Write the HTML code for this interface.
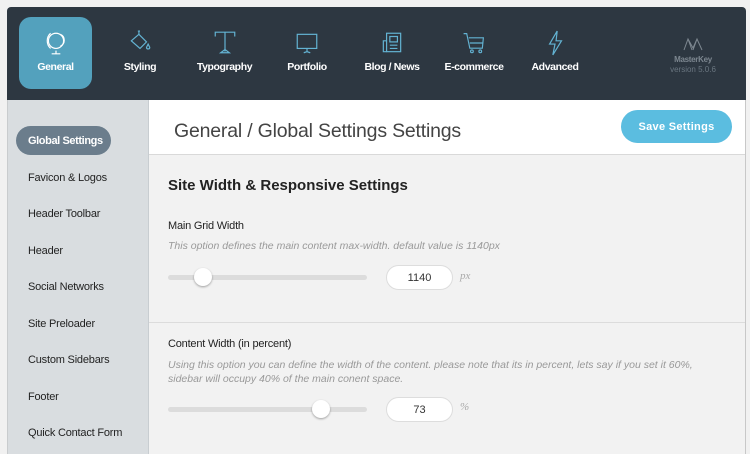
<!DOCTYPE html>
<html><head><meta charset="utf-8"><style>
*{margin:0;padding:0;box-sizing:border-box}
body{width:750px;height:454px;overflow:hidden;background:#f1f1f1;font-family:"Liberation Sans",Arial,sans-serif;position:relative}
.hdr{position:absolute;left:7px;top:7px;width:739px;height:93px;background:#2d3741;border-radius:4px 4px 0 0}
.tab{position:absolute;top:10px;height:72px;text-align:center;color:#fff;font-size:10.5px;font-weight:bold;letter-spacing:-0.4px}
.tab svg{position:absolute;left:50%;top:13px;transform:translateX(-50%)}
.tab span{position:absolute;left:-10px;right:-10px;top:44px;text-align:center;white-space:nowrap}
.tab.act{background:#53a1bd;border-radius:12px}
.side{position:absolute;left:7px;top:100px;width:142px;height:354px;background:#d9dde0;border-right:1px solid #c8cdd1;border-left:1px solid #c9ccce}
.side .it{position:absolute;left:20px;font-size:11px;color:#222;white-space:nowrap;letter-spacing:-0.2px}
.side .pill{position:absolute;left:8px;top:26px;width:95px;height:29px;background:#6b7d8c;border-radius:15px}
.main{position:absolute;left:149px;top:100px;width:597px;height:354px;background:#f2f2f2;border-right:1px solid #c8c8c8}
.top{position:absolute;left:0;top:0;width:596px;height:55px;background:#fff;border-bottom:1px solid #d9d9d9}
.top h1{position:absolute;left:25px;top:20px;font-size:19.5px;font-weight:normal;color:#444;letter-spacing:-0.2px}
.save{position:absolute;left:472px;top:10px;width:111px;height:33px;background:#5bbde0;border-radius:17px;color:#fff;font-size:11px;font-weight:bold;text-align:center;line-height:34px;letter-spacing:0.3px}
.h2{position:absolute;left:19px;top:77px;font-size:15px;font-weight:bold;color:#222}
.lbl{position:absolute;left:19px;font-size:11px;color:#222;letter-spacing:-0.2px}
.desc{position:absolute;left:19px;font-size:10.5px;font-style:italic;color:#999;line-height:14px}
.track{position:absolute;left:19px;width:199px;height:5px;background:#dcdcdc;border-radius:3px}
.knob{position:absolute;width:18px;height:18px;border-radius:50%;background:#fff;box-shadow:0 1px 2px rgba(0,0,0,.35)}
.inp{position:absolute;left:237px;width:67px;height:25px;border:1px solid #ddd;background:#fff;border-radius:13px;text-align:center;line-height:24px;font-size:11px;color:#333}
.unit{position:absolute;left:311px;font-size:11px;font-style:italic;color:#aaa;font-family:"Liberation Serif",serif}
.sep{position:absolute;left:0;top:222px;width:596px;height:1px;background:#dcdcdc}
</style></head><body>
<div class="hdr">
 <div class="tab act" style="left:12px;width:73px">
  <svg width="24" height="26" viewBox="0 0 22 24" fill="none" stroke="#fff" stroke-width="1.1"><circle cx="11" cy="10" r="7"/><path d="M6 3a9.5 9.5 0 0 0 0 14M11 19v3M7 22h8M15 4a6 6 0 0 1 0 11"/></svg>
  <span>General</span></div>
 <div class="tab" style="left:98px;width:70px">
  <svg width="24" height="26" viewBox="0 0 22 24" fill="none" stroke="#63b3d3" stroke-width="1.1"><path d="M3 10l7-6 7 7-6 6z M10 4V1 M9 1h2 M17 16c0 2 3 2 3 0l-1.5-3z"/></svg>
  <span>Styling</span></div>
 <div class="tab" style="left:180px;width:75px">
  <svg width="24" height="26" viewBox="0 0 22 24" fill="none" stroke="#63b3d3" stroke-width="1.1"><path d="M2 6V2h18v4M11 2v18M7 21h8l-4-3z"/></svg>
  <span>Typography</span></div>
 <div class="tab" style="left:270px;width:60px">
  <svg width="24" height="26" viewBox="0 0 22 24" fill="none" stroke="#63b3d3" stroke-width="1.1"><rect x="2" y="4" width="18" height="13"/><path d="M11 17v3M8 21l3-1 3 1"/></svg>
  <span>Portfolio</span></div>
 <div class="tab" style="left:350px;width:70px">
  <svg width="24" height="26" viewBox="0 0 22 24" fill="none" stroke="#63b3d3" stroke-width="1.1"><rect x="6" y="3" width="13" height="17"/><rect x="9" y="6" width="7" height="5"/><path d="M9 14h7M9 17h7M6 10H3v10h3"/></svg>
  <span>Blog / News</span></div>
 <div class="tab" style="left:432px;width:70px">
  <svg width="25" height="26" viewBox="0 0 24 24" fill="none" stroke="#63b3d3" stroke-width="1.1"><path d="M2 3h3l3 14h12l1-10H7M8 12h12"/><circle cx="10" cy="20" r="1.3"/><circle cx="18" cy="20" r="1.3"/></svg>
  <span>E-commerce</span></div>
 <div class="tab" style="left:518px;width:60px">
  <svg width="24" height="26" viewBox="0 0 22 24" fill="none" stroke="#63b3d3" stroke-width="1.1"><path d="M13 1L6 13h5l-2 10 8-13h-5z"/></svg>
  <span>Advanced</span></div>
 <svg style="position:absolute;left:676px;top:30px" width="20" height="14" viewBox="0 0 20 14" fill="none" stroke="#7d8790" stroke-width="1"><path d="M1 13L5 2l5 9 4-9 5 11M5 2l4 11M14 2l-4 11"/></svg>
 <div style="position:absolute;left:650px;top:48px;width:72px;text-align:center;font-size:8px;font-weight:bold;color:#7d8790;letter-spacing:-0.3px">MasterKey</div>
 <div style="position:absolute;left:650px;top:58px;width:72px;text-align:center;font-size:8px;color:#6a7680">version 5.0.6</div>
</div>
<div class="side">
 <div class="pill"></div>
 <div class="it" style="top:35px;color:#fff;font-weight:bold;letter-spacing:-0.4px">Global Settings</div>
 <div class="it" style="top:72px">Favicon &amp; Logos</div>
 <div class="it" style="top:108px">Header Toolbar</div>
 <div class="it" style="top:145px">Header</div>
 <div class="it" style="top:181px">Social Networks</div>
 <div class="it" style="top:218px">Site Preloader</div>
 <div class="it" style="top:254px">Custom Sidebars</div>
 <div class="it" style="top:291px">Footer</div>
 <div class="it" style="top:327px">Quick Contact Form</div>
</div>
<div class="main">
 <div class="top"><h1>General / Global Settings Settings</h1><div class="save">Save Settings</div></div>
 <div class="h2">Site Width &amp; Responsive Settings</div>
 <div class="lbl" style="top:120px">Main Grid Width</div>
 <div class="desc" style="top:139px">This option defines the main content max-width. default value is 1140px</div>
 <div class="track" style="top:175px"></div>
 <div class="knob" style="left:45px;top:168px"></div>
 <div class="inp" style="top:165px">1140</div>
 <div class="unit" style="top:170px">px</div>
 <div class="sep"></div>
 <div class="lbl" style="top:238px">Content Width (in percent)</div>
 <div class="desc" style="top:258px">Using this option you can define the width of the content. please note that its in percent, lets say if you set it 60%,<br>sidebar will occupy 40% of the main conent space.</div>
 <div class="track" style="top:307px"></div>
 <div class="knob" style="left:163px;top:300px"></div>
 <div class="inp" style="top:297px">73</div>
 <div class="unit" style="top:301px">%</div>
</div>
</body></html>
